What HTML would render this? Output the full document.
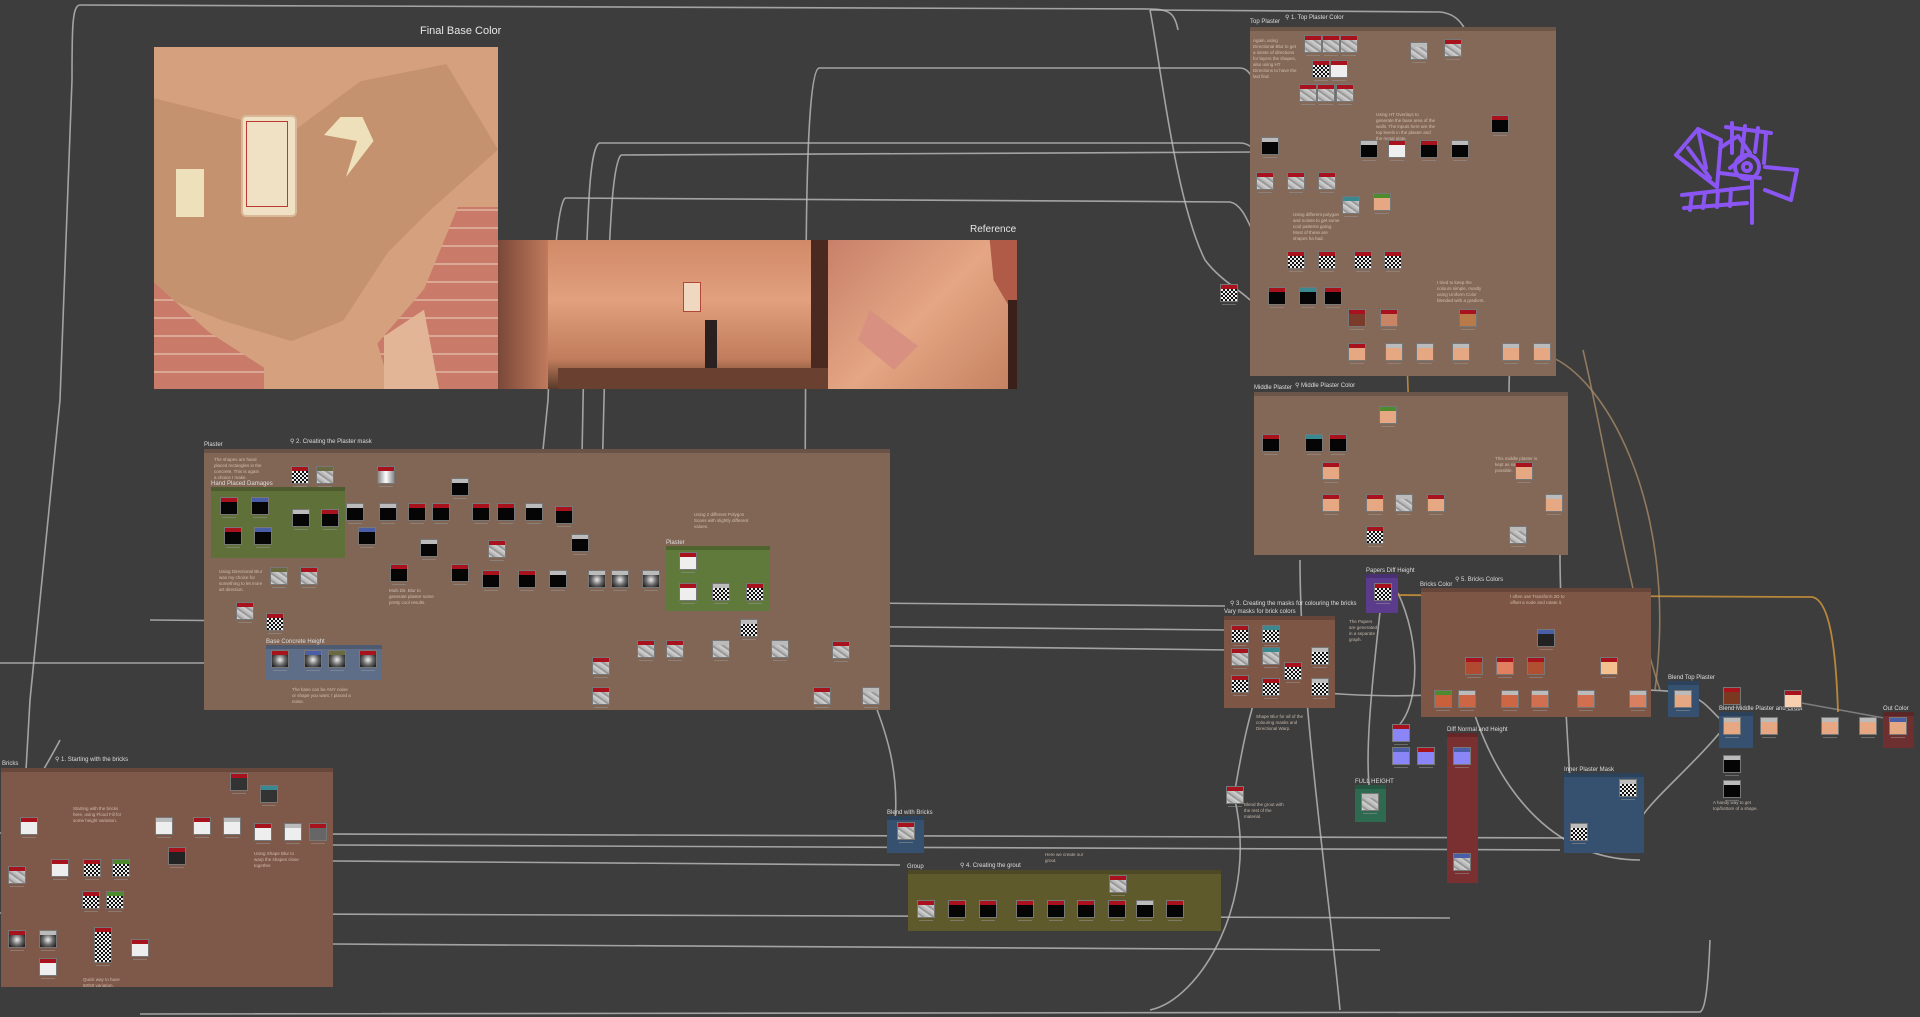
<!DOCTYPE html>
<html><head><meta charset="utf-8"><style>
html,body{margin:0;padding:0;width:1920px;height:1017px;overflow:hidden;background:#3d3d3d;font-family:"Liberation Sans",sans-serif}
.a{position:absolute}
.f{position:absolute;box-sizing:border-box;border-top:4px solid rgba(0,0,0,.18)}
.t{position:absolute;font-size:6px;color:#ddd;white-space:nowrap}
.c{position:absolute;font-size:4.5px;line-height:6px;color:#e8d6c6;opacity:.75}
.n{position:absolute;width:18px;height:18px;background:#050505;border:1px solid #777;box-sizing:border-box}
.n:before{content:'';position:absolute;left:0;right:0;top:0;height:4px;background:#a8121c}
.n:after{content:'';position:absolute;left:1px;right:1px;bottom:-4px;height:1px;background:#999;opacity:.5}
.g{background:repeating-linear-gradient(35deg,#ccc 0 2px,#999 2px 4px,#bbb 4px 6px)}
.w{background:#eee}
.k{background:repeating-conic-gradient(#111 0 25%,#eee 0 50%) 0 0/4px 4px}
.s{background:radial-gradient(circle at 50% 55%,#eee,#666 45%,#222 80%)}
.o{background:#e6a882}
.v{background:#8a86f7}
.hg:before{background:#bbb}
.hb:before{background:#4a5ea8}
.ht:before{background:#3a8890}
.hG:before{background:#4e8a2e}
.hy:before{background:#6a6a40}
</style></head><body>

<svg class="a" style="left:0;top:0" width="1920" height="1017" fill="none" stroke="#bdbdbd" stroke-width="1.6" stroke-opacity=".8">
<path d="M80 5 L1150 9 C1170 9 1175 14 1178 30"/>
<path d="M1150 10 L1440 12 C1460 14 1470 30 1472 60"/>
<path d="M80 5 C72 5 72 30 72 80 L60 400 L30 700 L14 980"/>
<path d="M819 68 L1240 68 C1250 68 1252 80 1262 90"/>
<path d="M819 68 C812 70 806 120 806 300 L804 690 C804 700 810 705 820 705"/>
<path d="M599 143 L1240 143 C1250 143 1255 150 1262 160"/>
<path d="M599 143 C590 150 588 200 585 300 L580 560"/>
<path d="M621 155 L1260 152"/>
<path d="M621 155 C612 165 610 230 606 320 L600 560"/>
<path d="M565 198 L1230 202 C1245 205 1250 230 1262 250"/>
<path d="M565 198 C555 210 552 300 548 400 L540 480"/>
<path d="M1150 10 C1160 60 1175 200 1205 260 C1220 280 1240 290 1250 300"/>
<path d="M860 603 L1225 606"/>
<path d="M150 620 L1225 630"/>
<path d="M400 640 L1230 650"/>
<path d="M0 833 L1580 838"/>
<path d="M330 845 L1560 850"/>
<path d="M0 663 L230 663"/>
<path d="M0 913 L1450 918"/>
<path d="M140 1014 L1700 1012 C1705 1010 1708 990 1710 940"/>
<path d="M332 944 L1380 950"/>
<path d="M332 861 L900 865"/>
<path d="M20 817 C30 790 50 760 60 740"/>
<path d="M1234 796 C1240 760 1250 700 1270 660"/>
<path d="M1234 796 C1260 900 1200 1000 1150 1010"/>
<path d="M895 822 C900 760 880 720 870 690"/>
<path d="M1380 612 C1370 700 1365 760 1370 793"/>
<path d="M1398 593 C1420 640 1420 700 1400 724"/>
<path d="M1730 720 C1700 760 1650 800 1640 820"/>
<path d="M1560 555 C1560 600 1565 700 1570 780"/>
<path d="M1510 360 C1505 450 1520 500 1530 540"/>
<path d="M1480 40 C1500 120 1510 250 1520 340"/>
<path d="M1300 560 C1300 700 1330 900 1340 1010"/>
<path d="M1470 700 C1500 800 1560 860 1640 860"/>
<path d="M1230 665 C1260 700 1420 700 1500 690"/>
<path d="M1640 690 C1700 690 1700 700 1723 722"/>
<path d="M1785 700 L1895 720" stroke-opacity=".5"/>
<path d="M1655 690 C1680 500 1600 370 1545 355" stroke="#a68a66"/>
<path d="M1381 595 L1812 597 C1830 600 1836 650 1838 712" stroke="#d89a3a" stroke-width="1.8"/>
<path d="M1395 210 C1410 250 1405 500 1420 540" stroke="#d89a3a"/>
<path d="M1400 420 C1420 450 1420 480 1430 500" stroke="#d89a3a"/>
<path d="M1583 350 C1600 420 1630 600 1660 690" stroke="#a68a66"/>
</svg>

<div class="t" style="left:420px;top:25px;font-size:11px;color:#e6e6e6">Final Base Color</div>
<div class="a" style="left:154px;top:47px;width:344px;height:342px;background:#d4a07e;overflow:hidden">
 <div class="a" style="left:0;top:0;width:344px;height:342px;background:#c4926e;clip-path:polygon(0 15%,40% 25%,60% 10%,85% 5%,100% 30%,80% 48%,68% 60%,55% 80%,40% 86%,20% 80%,0 72%)"></div>
 <div class="a" style="left:0;top:200px;width:110px;height:142px;background:repeating-linear-gradient(0deg,#c97a68 0 16px,#dca896 16px 18px);clip-path:polygon(0 25%,50% 60%,100% 85%,100% 100%,0 100%)"></div>
 <div class="a" style="left:210px;top:160px;width:134px;height:182px;background:repeating-linear-gradient(0deg,#c97a68 0 16px,#dca896 16px 18px);clip-path:polygon(70% 0,100% 0,100% 100%,20% 100%,10% 75%,45% 45%)"></div>
 <div class="a" style="left:230px;top:210px;width:100px;height:132px;background:#e2b596;clip-path:polygon(0 60%,40% 40%,55% 100%,0 100%)"></div>
 <div class="a" style="left:87px;top:68px;width:52px;height:98px;background:#f0e0c4;border:2px solid #d8b898;border-radius:5px"></div>
 <div class="a" style="left:92px;top:74px;width:40px;height:84px;border:1.5px solid #b83a30"></div>
 <div class="a" style="left:22px;top:122px;width:28px;height:48px;background:#efe0bc"></div>
 <div class="a" style="left:170px;top:70px;width:55px;height:60px;background:#efe0bc;clip-path:polygon(30% 0,70% 0,90% 40%,40% 100%,60% 40%,0 30%)"></div>
</div>
<div class="t" style="left:970px;top:224px;font-size:10px;color:#e6e6e6">Reference</div>
<div class="a" style="left:498px;top:240px;width:330px;height:149px;background:linear-gradient(180deg,#d08a68,#e2a07e 40%,#c07c5c 80%,#5a3a2a);overflow:hidden">
 <div class="a" style="left:0;top:0;width:50px;height:149px;background:linear-gradient(90deg,#7a4838,#c07a5c)"></div>
 <div class="a" style="left:185px;top:42px;width:16px;height:28px;background:#f0d8c0;border:1px solid #b04838"></div>
 <div class="a" style="left:207px;top:80px;width:12px;height:50px;background:#2a2020"></div>
 <div class="a" style="left:313px;top:0;width:17px;height:149px;background:#4a2a20"></div>
 <div class="a" style="left:60px;top:128px;width:270px;height:21px;background:#6a4030"></div>
</div>
<div class="a" style="left:828px;top:240px;width:189px;height:149px;background:linear-gradient(135deg,#c8806a,#e4a684 50%,#c48060);overflow:hidden">
 <div class="a" style="left:150px;top:0;width:39px;height:80px;background:#b05a48;clip-path:polygon(30% 0,100% 0,100% 100%,40% 50%)"></div>
 <div class="a" style="left:30px;top:70px;width:60px;height:60px;background:#d89080;clip-path:polygon(20% 0,100% 60%,60% 100%,0 50%)"></div>
 <div class="a" style="left:180px;top:60px;width:9px;height:89px;background:#3a2018"></div>
</div>

<div class="t" style="left:1250px;top:19px">Top Plaster</div><div class="t" style="left:1285px;top:14px">⚲ 1. Top Plaster Color</div>
<div class="f" style="left:1250px;top:27px;width:306px;height:349px;background:#846958"></div>
<div class="t" style="left:1254px;top:385px">Middle Plaster</div><div class="t" style="left:1295px;top:382px">⚲ Middle Plaster Color</div>
<div class="f" style="left:1254px;top:392px;width:314px;height:163px;background:#836858"></div>
<div class="t" style="left:204px;top:442px">Plaster</div><div class="t" style="left:290px;top:438px">⚲ 2. Creating the Plaster mask</div>
<div class="f" style="left:204px;top:449px;width:686px;height:261px;background:#816656"></div>
<div class="t" style="left:2px;top:761px">Bricks</div><div class="t" style="left:55px;top:756px">⚲ 1. Starting with the bricks</div>
<div class="f" style="left:1px;top:768px;width:332px;height:219px;background:#7e5849"></div>
<div class="t" style="left:1420px;top:582px">Bricks Color</div><div class="t" style="left:1455px;top:576px">⚲ 5. Bricks Colors</div>
<div class="f" style="left:1421px;top:588px;width:230px;height:129px;background:#7e5646"></div>
<div class="t" style="left:1224px;top:609px">Vary masks for brick colors</div><div class="t" style="left:1230px;top:600px">⚲ 3. Creating the masks for colouring the bricks</div>
<div class="f" style="left:1224px;top:616px;width:111px;height:92px;background:#7e5646"></div>
<div class="t" style="left:907px;top:864px">Group</div><div class="t" style="left:960px;top:862px">⚲ 4. Creating the grout</div>
<div class="f" style="left:908px;top:870px;width:313px;height:61px;background:#5f5a2c"></div>
<div class="t" style="left:211px;top:481px">Hand Placed Damages</div>
<div class="f" style="left:211px;top:487px;width:134px;height:71px;background:#5f7039"></div>
<div class="t" style="left:666px;top:540px">Plaster</div>
<div class="f" style="left:666px;top:546px;width:104px;height:65px;background:#5f7a3a"></div>
<div class="t" style="left:266px;top:639px">Base Concrete Height</div>
<div class="f" style="left:266px;top:645px;width:116px;height:35px;background:#5e6e88"></div>
<div class="t" style="left:887px;top:810px">Blend with Bricks</div>
<div class="f" style="left:887px;top:816px;width:37px;height:37px;background:#36516f"></div>
<div class="t" style="left:1564px;top:767px">Inner Plaster Mask</div>
<div class="f" style="left:1564px;top:773px;width:80px;height:80px;background:#36516f"></div>
<div class="t" style="left:1668px;top:675px">Blend Top Plaster</div>
<div class="f" style="left:1668px;top:681px;width:31px;height:36px;background:#36516f"></div>
<div class="t" style="left:1719px;top:706px">Blend Middle Plaster and Grout</div>
<div class="f" style="left:1719px;top:712px;width:34px;height:36px;background:#36516f"></div>
<div class="t" style="left:1883px;top:706px">Out Color</div>
<div class="f" style="left:1883px;top:712px;width:31px;height:36px;background:#6e2f30"></div>
<div class="t" style="left:1447px;top:727px">Diff Normal and Height</div>
<div class="f" style="left:1447px;top:733px;width:31px;height:150px;background:#7a2f31"></div>
<div class="t" style="left:1366px;top:568px">Papers Diff Height</div>
<div class="f" style="left:1366px;top:574px;width:32px;height:39px;background:#5a3b8c"></div>
<div class="t" style="left:1355px;top:779px">FULL HEIGHT</div>
<div class="f" style="left:1355px;top:785px;width:31px;height:37px;background:#2e6a50"></div>

<div class="c" style="left:1253px;top:38px;width:45px">Again, using Directional Blur to get a sense of directions for layers the shapes, also using HT Directions to have the last find.</div>
<div class="c" style="left:1376px;top:112px;width:60px">Using HT Overlays to generate the base area of the walls. The inputs here are the top levels in the plaster and the metal plate.</div>
<div class="c" style="left:1293px;top:212px;width:48px">Using different polygon and noises to get some cool patterns going. Most of these are shapes ha had.</div>
<div class="c" style="left:1437px;top:280px;width:48px">I tried to keep the colours simple, mostly using Uniform Color blended with a gradient.</div>
<div class="c" style="left:1495px;top:456px;width:50px">This middle plaster is kept as simple as possible.</div>
<div class="c" style="left:214px;top:457px;width:48px">The shapes are hand placed rectangles in the concrete. This is again a choice I make.</div>
<div class="c" style="left:219px;top:569px;width:45px">Using Directional Blur was my choice for something to let more art direction.</div>
<div class="c" style="left:389px;top:588px;width:48px">Multi Dir. Blur to generate plaster some pretty cool results.</div>
<div class="c" style="left:694px;top:512px;width:62px">Using 2 different Polygon Scans with slightly different values.</div>
<div class="c" style="left:292px;top:687px;width:60px">The base can be ANY noise or shape you want. I placed a noise.</div>
<div class="c" style="left:73px;top:806px;width:55px">Starting with the bricks here, using Flood Fill for some height variation.</div>
<div class="c" style="left:254px;top:851px;width:48px">Using Shape Blur to warp the shapes close together.</div>
<div class="c" style="left:83px;top:977px;width:48px">Quick way to have 50/50 variation.</div>
<div class="c" style="left:1256px;top:714px;width:55px">Shape Blur for all of the colouring masks and Directional Warp.</div>
<div class="c" style="left:1510px;top:594px;width:60px">I often use Transform 2D to offset a node and rotate it.</div>
<div class="c" style="left:1713px;top:800px;width:55px">A handy way to get top/bottom of a shape.</div>
<div class="c" style="left:1244px;top:802px;width:40px">Blend the grout with the rest of the material.</div>
<div class="c" style="left:1045px;top:852px;width:45px">Here we create our grout.</div>
<div class="c" style="left:1349px;top:619px;width:30px">The Papers are generated in a separate graph.</div>

<svg class="a" style="left:1670px;top:118px" width="135" height="112" fill="none" stroke="#8a55f2" stroke-width="4" stroke-linecap="round" stroke-linejoin="round">
<path d="M6 37 L28 11 L51 22 L47 69 Z"/>
<path d="M18 30 L40 60 M28 11 L36 50"/>
<path d="M56 9 L101 15 M62 5 L62 35 M75 8 L72 36 M88 10 L85 34 M96 16 L94 45"/>
<path d="M50 30 L68 18 L80 35 L60 50"/>
<circle cx="77" cy="49" r="12"/><circle cx="77" cy="49" r="4"/>
<path d="M95 49 L127 52 L121 82 L95 72"/>
<path d="M12 77 L82 69 M14 90 L77 85 M22 76 L20 92 M35 75 L33 90 M48 73 L47 89 M61 71 L60 88"/>
<path d="M82 60 L82 105 M50 55 L90 60"/>
</svg>

<b class="n g" style="left:1304px;top:35px"></b><b class="n g" style="left:1322px;top:35px"></b><b class="n g" style="left:1340px;top:35px"></b>
<b class="n g hg" style="left:1410px;top:42px"></b><b class="n g" style="left:1444px;top:39px"></b>
<b class="n k" style="left:1312px;top:60px"></b><b class="n w" style="left:1330px;top:60px"></b>
<b class="n g" style="left:1299px;top:84px"></b><b class="n g" style="left:1317px;top:84px"></b><b class="n g" style="left:1336px;top:84px"></b>
<b class="n" style="left:1491px;top:115px"></b>
<b class="n hg" style="left:1261px;top:137px"></b>
<b class="n hg" style="left:1360px;top:140px"></b><b class="n w" style="left:1388px;top:140px"></b><b class="n" style="left:1420px;top:140px"></b><b class="n hg" style="left:1451px;top:140px"></b>
<b class="n g" style="left:1256px;top:172px"></b><b class="n g" style="left:1287px;top:172px"></b><b class="n g" style="left:1318px;top:172px"></b>
<b class="n g ht" style="left:1342px;top:196px"></b><b class="n o hG" style="left:1373px;top:193px"></b>
<b class="n k" style="left:1287px;top:251px"></b><b class="n k" style="left:1318px;top:251px"></b><b class="n k" style="left:1354px;top:251px"></b><b class="n k" style="left:1384px;top:251px"></b>
<b class="n" style="left:1268px;top:287px"></b><b class="n ht" style="left:1299px;top:287px"></b><b class="n" style="left:1324px;top:287px"></b>
<b class="n" style="left:1348px;top:309px;background:#7a3b2a"></b><b class="n" style="left:1380px;top:309px;background:#c98466"></b><b class="n" style="left:1459px;top:309px;background:#b87a48"></b>
<b class="n o" style="left:1348px;top:343px"></b><b class="n o hg" style="left:1385px;top:343px"></b><b class="n o hg" style="left:1416px;top:343px"></b><b class="n o hg" style="left:1452px;top:343px"></b><b class="n o hg" style="left:1502px;top:343px"></b><b class="n o hg" style="left:1533px;top:343px"></b>
<b class="n k" style="left:1220px;top:284px"></b>
<b class="n" style="left:1262px;top:434px"></b><b class="n ht" style="left:1305px;top:434px"></b><b class="n" style="left:1329px;top:434px"></b>
<b class="n o" style="left:1322px;top:462px"></b><b class="n o" style="left:1322px;top:494px"></b><b class="n o" style="left:1366px;top:494px"></b>
<b class="n o hG" style="left:1379px;top:406px"></b><b class="n k" style="left:1366px;top:526px"></b><b class="n g hg" style="left:1395px;top:494px"></b>
<b class="n o" style="left:1427px;top:494px"></b><b class="n o" style="left:1515px;top:462px"></b><b class="n o hg" style="left:1545px;top:494px"></b>
<b class="n g hg" style="left:1509px;top:526px"></b>
<b class="n k" style="left:291px;top:466px"></b><b class="n g hy" style="left:316px;top:466px"></b>
<b class="n w" style="left:377px;top:466px;background:linear-gradient(90deg,#888,#fff,#888)"></b><b class="n hg" style="left:451px;top:478px"></b>
<b class="n" style="left:220px;top:497px"></b><b class="n hb" style="left:251px;top:497px"></b><b class="n hg" style="left:292px;top:509px"></b><b class="n" style="left:321px;top:509px"></b>
<b class="n" style="left:224px;top:527px"></b><b class="n hb" style="left:254px;top:527px"></b>
<b class="n hg" style="left:346px;top:503px"></b><b class="n hg" style="left:379px;top:503px"></b><b class="n" style="left:408px;top:503px"></b><b class="n" style="left:432px;top:503px"></b><b class="n" style="left:472px;top:503px"></b><b class="n" style="left:497px;top:503px"></b><b class="n hg" style="left:525px;top:503px"></b><b class="n" style="left:555px;top:506px"></b>
<b class="n hb" style="left:358px;top:527px"></b><b class="n hg" style="left:420px;top:539px"></b><b class="n g" style="left:488px;top:540px"></b><b class="n hg" style="left:571px;top:534px"></b>
<b class="n g hy" style="left:270px;top:567px"></b><b class="n g" style="left:300px;top:567px"></b><b class="n" style="left:390px;top:564px"></b><b class="n" style="left:451px;top:564px"></b><b class="n" style="left:482px;top:570px"></b><b class="n" style="left:518px;top:570px"></b><b class="n hg" style="left:549px;top:570px"></b>
<b class="n s hg" style="left:588px;top:570px"></b><b class="n s hg" style="left:611px;top:570px"></b><b class="n s hg" style="left:642px;top:570px"></b>
<b class="n w" style="left:679px;top:552px"></b><b class="n w" style="left:679px;top:583px"></b><b class="n k hg" style="left:712px;top:583px"></b><b class="n k" style="left:746px;top:583px"></b>
<b class="n g" style="left:236px;top:602px"></b><b class="n k" style="left:266px;top:613px"></b>
<b class="n s" style="left:271px;top:650px"></b><b class="n s hb" style="left:304px;top:650px"></b><b class="n s hy" style="left:328px;top:650px"></b><b class="n s" style="left:359px;top:650px"></b>
<b class="n k hg" style="left:740px;top:619px"></b>
<b class="n g" style="left:637px;top:640px"></b><b class="n g" style="left:666px;top:640px"></b><b class="n g hg" style="left:712px;top:640px"></b><b class="n g hg" style="left:771px;top:640px"></b><b class="n g" style="left:832px;top:641px"></b>
<b class="n g" style="left:592px;top:657px"></b><b class="n g" style="left:592px;top:687px"></b><b class="n g" style="left:813px;top:687px"></b><b class="n g hg" style="left:862px;top:687px"></b>
<b class="n w" style="left:20px;top:817px"></b><b class="n g" style="left:8px;top:866px"></b><b class="n w" style="left:51px;top:859px"></b><b class="n k" style="left:83px;top:859px"></b><b class="n k hG" style="left:112px;top:859px"></b>
<b class="n w hg" style="left:155px;top:817px"></b><b class="n w" style="left:193px;top:817px"></b><b class="n w hg" style="left:223px;top:817px"></b><b class="n w" style="left:254px;top:823px"></b><b class="n w hg" style="left:284px;top:823px"></b><b class="n g" style="left:309px;top:823px;background:#666"></b>
<b class="n k" style="left:230px;top:773px;background:#333"></b><b class="n ht" style="left:260px;top:785px;background:#333"></b><b class="n" style="left:168px;top:847px;background:#222"></b>
<b class="n k" style="left:82px;top:891px"></b><b class="n k hG" style="left:106px;top:891px"></b>
<b class="n s" style="left:8px;top:930px"></b><b class="n s hg" style="left:39px;top:930px"></b><b class="n k" style="left:94px;top:927px;height:36px"></b><b class="n w" style="left:131px;top:939px"></b><b class="n w" style="left:39px;top:958px"></b>
<b class="n k" style="left:1374px;top:583px"></b>
<b class="n k" style="left:1231px;top:625px"></b><b class="n k ht" style="left:1262px;top:625px"></b><b class="n g" style="left:1231px;top:648px"></b><b class="n g ht" style="left:1262px;top:647px"></b><b class="n k" style="left:1284px;top:662px"></b><b class="n k hg" style="left:1311px;top:647px"></b><b class="n k" style="left:1231px;top:675px"></b><b class="n k" style="left:1262px;top:678px"></b><b class="n k hg" style="left:1311px;top:678px"></b>
<b class="n g hb" style="left:1537px;top:629px;background:#222"></b>
<b class="n" style="left:1465px;top:657px;background:#b04a30"></b><b class="n" style="left:1496px;top:657px;background:#e08060"></b><b class="n" style="left:1527px;top:657px;background:#b05030"></b><b class="n" style="left:1600px;top:657px;background:#f4c090"></b>
<b class="n hG" style="left:1434px;top:690px;background:#c8603c"></b><b class="n hg" style="left:1458px;top:690px;background:#cc6644"></b><b class="n hg" style="left:1501px;top:690px;background:#cc6644"></b><b class="n hg" style="left:1531px;top:690px;background:#d07050"></b><b class="n hg" style="left:1577px;top:690px;background:#d07050"></b><b class="n hg" style="left:1629px;top:690px;background:#d88060"></b>
<b class="n o hg" style="left:1674px;top:690px"></b><b class="n" style="left:1723px;top:687px;background:#7a3820"></b><b class="n" style="left:1784px;top:690px;background:#f8d0b0"></b>
<b class="n o hg" style="left:1723px;top:717px"></b><b class="n o hg" style="left:1760px;top:717px"></b><b class="n o hg" style="left:1821px;top:717px"></b><b class="n o hg" style="left:1859px;top:717px"></b><b class="n o hb" style="left:1889px;top:717px"></b>
<b class="n hg" style="left:1723px;top:755px"></b><b class="n hg" style="left:1723px;top:780px"></b>
<b class="n v" style="left:1392px;top:724px"></b><b class="n v hb" style="left:1392px;top:747px"></b><b class="n v" style="left:1417px;top:747px"></b><b class="n v hb" style="left:1453px;top:747px"></b>
<b class="n g hb" style="left:1453px;top:853px"></b><b class="n g hg" style="left:1361px;top:793px"></b><b class="n g" style="left:1226px;top:786px"></b>
<b class="n k hg" style="left:1619px;top:779px"></b><b class="n k hg" style="left:1570px;top:823px"></b>
<b class="n g" style="left:917px;top:900px"></b><b class="n" style="left:948px;top:900px"></b><b class="n" style="left:979px;top:900px"></b><b class="n" style="left:1016px;top:900px"></b><b class="n" style="left:1047px;top:900px"></b><b class="n" style="left:1077px;top:900px"></b><b class="n" style="left:1108px;top:900px"></b><b class="n hg" style="left:1136px;top:900px"></b><b class="n" style="left:1166px;top:900px"></b>
<b class="n g" style="left:1109px;top:875px"></b><b class="n g" style="left:897px;top:822px"></b>
</body></html>
